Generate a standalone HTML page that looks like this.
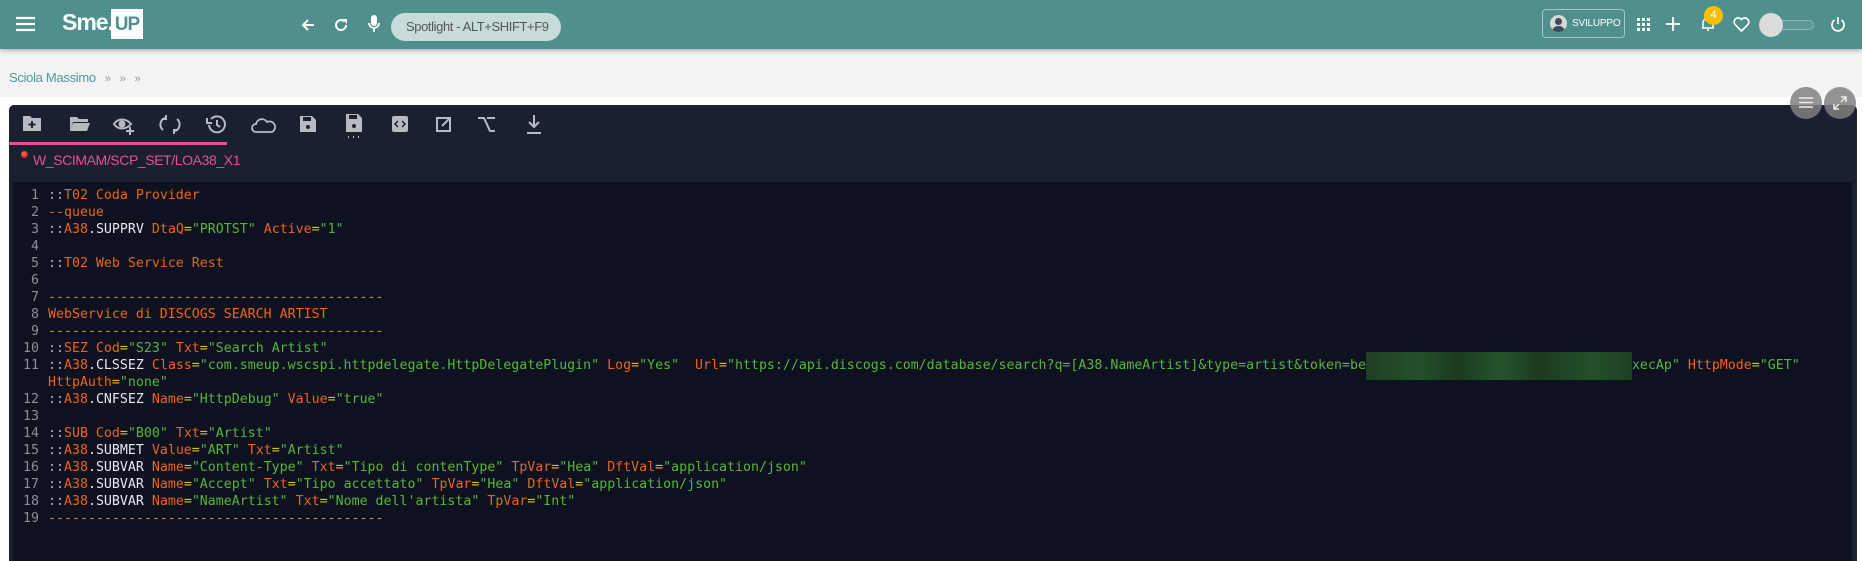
<!DOCTYPE html>
<html><head><meta charset="utf-8"><style>
*{margin:0;padding:0;box-sizing:border-box}
body{width:1862px;height:561px;overflow:hidden;background:#f3f3f3;font-family:"Liberation Sans",sans-serif;position:relative}
.hdr{position:absolute;left:0;top:0;width:1862px;height:49px;background:#4f8f8d;box-shadow:0 2px 4px rgba(0,0,0,.25)}
.abs{position:absolute}
.bc{position:absolute;left:9px;top:70px;font-size:13px;color:#4f9a98;letter-spacing:-.3px}
.bc span{color:#999;margin-left:9px;font-size:11px}
.white{position:absolute;left:0;top:97px;width:1862px;height:464px;background:#fff}
.panel{position:absolute;left:9px;top:105px;width:1848px;height:456px;background:#1b2030;border-radius:5px 5px 0 0}
.code{position:absolute;left:13px;top:182px;width:1839px;height:379px;background:#0d1120}
.ln{display:inline-block;text-align:right;color:#8b8f99;padding-right:9px;box-sizing:content-box;width:26px}
.o{color:#e8661a}.g{color:#5ab43c}.y{color:#e8c200}.c{color:#aab0bd}.d{color:#d89a20}
.red{display:inline-block;width:266px;height:17px;vertical-align:top;position:relative}
.red:after{content:"";position:absolute;left:0;top:-5px;width:266px;height:28px;background:linear-gradient(90deg,#1f3f22,#24502a 20%,#1c3a20 35%,#26552b 50%,#1d3b21 65%,#23502a 85%,#1e3f22)}
.ic{position:absolute;top:113px}
.tab{position:absolute;left:33px;top:152px;font-size:14px;color:#e9508f;letter-spacing:-.4px}
</style></head><body>
<div class="hdr">
 <svg class="abs" style="left:16px;top:16px" width="19" height="16"><path d="M0 2h19M0 8h19M0 14h19" stroke="#fff" stroke-width="2.2"/></svg>
 <div class="abs" style="left:62px;top:9px;font-size:23px;font-weight:bold;color:#fff;letter-spacing:-1px">Sme.</div>
 <div class="abs" style="left:111px;top:9px;width:32px;height:30px;background:#fff;color:#4f8f8d;font-weight:bold;font-size:19px;text-align:center;line-height:32px;letter-spacing:-1px">UP</div>
 <svg class="abs" style="left:300px;top:17px" width="16" height="16"><path d="M14 8H3M8 3L3 8l5 5" stroke="#fff" stroke-width="2" fill="none"/></svg>
 <svg class="abs" style="left:333px;top:17px" width="16" height="16"><path d="M13 8a5 5 0 1 1-1.5-3.5" stroke="#fff" stroke-width="2" fill="none"/><path d="M9 2h5v5z" fill="#fff"/></svg>
 <svg class="abs" style="left:368px;top:14px" width="12" height="20"><rect x="3" y="1" width="6" height="11" rx="3" fill="#fff"/><path d="M1 9a5 5 0 0 0 10 0M6 14v4" stroke="#fff" stroke-width="1.8" fill="none"/></svg>
 <div class="abs" style="left:391px;top:13px;width:170px;height:28px;border-radius:14px;background:#c7dcda;color:#555;font-size:13px;line-height:28px;padding-left:15px;letter-spacing:-.4px">Spotlight - ALT+SHIFT+F9</div>
 <div class="abs" style="left:1542px;top:9px;width:83px;height:29px;border:1px solid #a5c8c6;border-radius:4px;color:#fff;font-size:10px;line-height:27px;padding-left:29px;letter-spacing:-.2px">SVILUPPO</div>
 <div class="abs" style="left:1550px;top:15px;width:17px;height:17px;border-radius:50%;background:#d8d8d8;overflow:hidden"><div style="margin:3px auto 0;width:7px;height:7px;border-radius:50%;background:#3d4a5a"></div><div style="margin:1px auto;width:13px;height:8px;border-radius:6px 6px 0 0;background:#3d4a5a"></div></div>
 <svg class="abs" style="left:1637px;top:18px" width="13" height="13" fill="#fff"><rect x="0" y="0" width="3" height="3"/><rect x="5" y="0" width="3" height="3"/><rect x="10" y="0" width="3" height="3"/><rect x="0" y="5" width="3" height="3"/><rect x="5" y="5" width="3" height="3"/><rect x="10" y="5" width="3" height="3"/><rect x="0" y="10" width="3" height="3"/><rect x="5" y="10" width="3" height="3"/><rect x="10" y="10" width="3" height="3"/></svg>
 <svg class="abs" style="left:1666px;top:17px" width="14" height="14"><path d="M7 0v14M0 7h14" stroke="#fff" stroke-width="1.8"/></svg>
 <svg class="abs" style="left:1701px;top:16px" width="14" height="16"><path d="M2 12V7a5 5 0 0 1 10 0v5H1h12M6 14h2" stroke="#fff" stroke-width="1.5" fill="none"/></svg>
 <div class="abs" style="left:1704px;top:6px;width:19px;height:19px;border-radius:50%;background:#f6c000;color:#fff;font-size:11px;text-align:center;line-height:19px">4</div>
 <svg class="abs" style="left:1733px;top:17px" width="17" height="15"><path d="M8.5 14L2 7.5A3.6 3.6 0 0 1 8.5 2.5 3.6 3.6 0 0 1 15 7.5z" stroke="#fff" stroke-width="1.7" fill="none"/></svg>
 <div class="abs" style="left:1760px;top:20px;width:54px;height:10px;border-radius:5px;border:1px solid #8fb8b6;background:#5a9896"></div>
 <div class="abs" style="left:1759px;top:13px;width:24px;height:24px;border-radius:50%;background:#dcdcdc"></div>
 <svg class="abs" style="left:1830px;top:16px" width="16" height="17"><path d="M8 1v7M4.5 4a6 6 0 1 0 7 0" stroke="#fff" stroke-width="1.7" fill="none"/></svg>
</div>
<div class="bc">Sciola Massimo<span>»</span><span>»</span><span>»</span></div>
<div class="white"></div>
<div class="panel"></div>
<svg class="ic" style="left:22px" width="560" height="26" fill="#b7bac3" stroke="#b7bac3">
 <path d="M1 3h7l2 2h9v13H1z" stroke="none"/><path d="M10 8v7M6.5 11.5h7" stroke="#1b2030" stroke-width="2"/>
 <path d="M48 4h7l2 2h9v3H51l-3 9z M51 10h17l-3 8H48z" stroke="none"/>
 <g fill="none" stroke-width="2"><path d="M92 11c4-6 12-6 17 0c-5 6-13 6-17 0z"/><circle cx="100" cy="11" r="2.5" fill="#b7bac3"/><path d="M108 14v8M104 18h8"/></g>
 <g fill="none" stroke-width="2"><path d="M143 5a7 7 0 0 0-2 12M153 18a7 7 0 0 0 2-12"/><path d="M144 2v4h-4M152 21v-4h4"/></g>
 <g fill="none" stroke-width="2"><path d="M187 12a8 8 0 1 0 2-6"/><path d="M185 5v5h5"/><path d="M195 7v5l3 2"/></g>
 <path d="M234 19a4 4 0 0 1 0-8 6 6 0 0 1 11-2 5 5 0 0 1 5 10z" fill="none" stroke-width="1.8"/>
 <path d="M278 3h12l4 4v12h-16z" stroke="none"/><rect x="281" y="4" width="8" height="4" fill="#1b2030" stroke="none"/><circle cx="286" cy="14" r="2" fill="#1b2030" stroke="none"/>
 <path d="M324 1h12l4 4v14h-16z" stroke="none"/><rect x="327" y="2" width="8" height="4" fill="#1b2030" stroke="none"/><circle cx="332" cy="13" r="2" fill="#1b2030" stroke="none"/><path d="M326 24h1M331 24h1M336 24h1" stroke-width="2"/>
 <rect x="370" y="3" width="16" height="16" rx="2" stroke="none"/><path d="M376 8l-3 3 3 3M380 8l3 3-3 3" fill="none" stroke="#1b2030" stroke-width="1.5"/>
 <path d="M424 5h-9v13h13v-9" fill="none" stroke-width="2"/><path d="M420 13l8-8M423 5h5v5" fill="none" stroke-width="2"/>
 <path d="M456 5h6l6 13h5M465 5h8" fill="none" stroke-width="2"/>
 <path d="M512 2v12M507 9l5 5 5-5M505 20h14" fill="none" stroke-width="2"/>
</svg>
<div class="abs" style="left:9px;top:142px;width:218px;height:3px;background:#e9508f"></div>
<div class="abs" style="left:21px;top:151px;width:7px;height:7px;border-radius:50%;background:radial-gradient(circle at 35% 35%,#ff6a6a,#c00)"></div>
<div class="tab">W_SCIMAM/SCP_SET/LOA38_X1</div>
<div class="code"></div>
<div class="abs" style="left:1790px;top:87px;width:32px;height:32px;border-radius:50%;background:rgba(128,128,128,.85)"><svg style="margin:10px 0 0 9px" width="14" height="11"><path d="M0 1h14M0 5.5h14M0 10h14" stroke="#eee" stroke-width="1.6"/></svg></div>
<div class="abs" style="left:1824px;top:87px;width:32px;height:32px;border-radius:50%;background:rgba(128,128,128,.85)"><svg style="margin:9px 0 0 9px" width="14" height="14"><path d="M1 13l5-5M1 8v5h5M13 1L8 6M8 1h5v5" stroke="#eee" stroke-width="1.5" fill="none"/></svg></div>
<pre style="position:absolute;left:13px;top:187px;font-family:'DejaVu Sans Mono',monospace;font-size:13.27px;line-height:17px;color:#e6e8ef"><span class="ln">1</span><span class="c">::</span><span class="o">T02 Coda Provider</span>
<span class="ln">2</span><span class="o">--queue</span>
<span class="ln">3</span><span class="c">::</span><span class="o">A38</span>.SUPPRV <span class="o">DtaQ</span><span class="y">=</span><span class="g">"PROTST"</span> <span class="o">Active</span><span class="y">=</span><span class="g">"1"</span>
<span class="ln">4</span>
<span class="ln">5</span><span class="c">::</span><span class="o">T02 Web Service Rest</span>
<span class="ln">6</span>
<span class="ln">7</span><span class="d">------------------------------------------</span>
<span class="ln">8</span><span class="o">WebService di DISCOGS SEARCH ARTIST</span>
<span class="ln">9</span><span class="d">------------------------------------------</span>
<span class="ln">10</span><span class="c">::</span><span class="o">SEZ Cod</span><span class="y">=</span><span class="g">"S23"</span> <span class="o">Txt</span><span class="y">=</span><span class="g">"Search Artist"</span>
<span class="ln">11</span><span class="c">::</span><span class="o">A38</span>.CLSSEZ <span class="o">Class</span><span class="y">=</span><span class="g">"com.smeup.wscspi.httpdelegate.HttpDelegatePlugin"</span> <span class="o">Log</span><span class="y">=</span><span class="g">"Yes"</span>  <span class="o">Url</span><span class="y">=</span><span class="g">"https://api.discogs.com/database/search?q=[A38.NameArtist]&amp;type=artist&amp;token=be</span><span class="red"></span><span class="g">xecAp"</span> <span class="o">HttpMode</span><span class="y">=</span><span class="g">"GET"</span>
<span class="ln"></span><span class="o">HttpAuth</span><span class="y">=</span><span class="g">"none"</span>
<span class="ln">12</span><span class="c">::</span><span class="o">A38</span>.CNFSEZ <span class="o">Name</span><span class="y">=</span><span class="g">"HttpDebug"</span> <span class="o">Value</span><span class="y">=</span><span class="g">"true"</span>
<span class="ln">13</span>
<span class="ln">14</span><span class="c">::</span><span class="o">SUB Cod</span><span class="y">=</span><span class="g">"B00"</span> <span class="o">Txt</span><span class="y">=</span><span class="g">"Artist"</span>
<span class="ln">15</span><span class="c">::</span><span class="o">A38</span>.SUBMET <span class="o">Value</span><span class="y">=</span><span class="g">"ART"</span> <span class="o">Txt</span><span class="y">=</span><span class="g">"Artist"</span>
<span class="ln">16</span><span class="c">::</span><span class="o">A38</span>.SUBVAR <span class="o">Name</span><span class="y">=</span><span class="g">"Content-Type"</span> <span class="o">Txt</span><span class="y">=</span><span class="g">"Tipo di contenType"</span> <span class="o">TpVar</span><span class="y">=</span><span class="g">"Hea"</span> <span class="o">DftVal</span><span class="y">=</span><span class="g">"application/json"</span>
<span class="ln">17</span><span class="c">::</span><span class="o">A38</span>.SUBVAR <span class="o">Name</span><span class="y">=</span><span class="g">"Accept"</span> <span class="o">Txt</span><span class="y">=</span><span class="g">"Tipo accettato"</span> <span class="o">TpVar</span><span class="y">=</span><span class="g">"Hea"</span> <span class="o">DftVal</span><span class="y">=</span><span class="g">"application/json"</span>
<span class="ln">18</span><span class="c">::</span><span class="o">A38</span>.SUBVAR <span class="o">Name</span><span class="y">=</span><span class="g">"NameArtist"</span> <span class="o">Txt</span><span class="y">=</span><span class="g">"Nome dell'artista"</span> <span class="o">TpVar</span><span class="y">=</span><span class="g">"Int"</span>
<span class="ln">19</span><span class="d">------------------------------------------</span></pre>
</body></html>
